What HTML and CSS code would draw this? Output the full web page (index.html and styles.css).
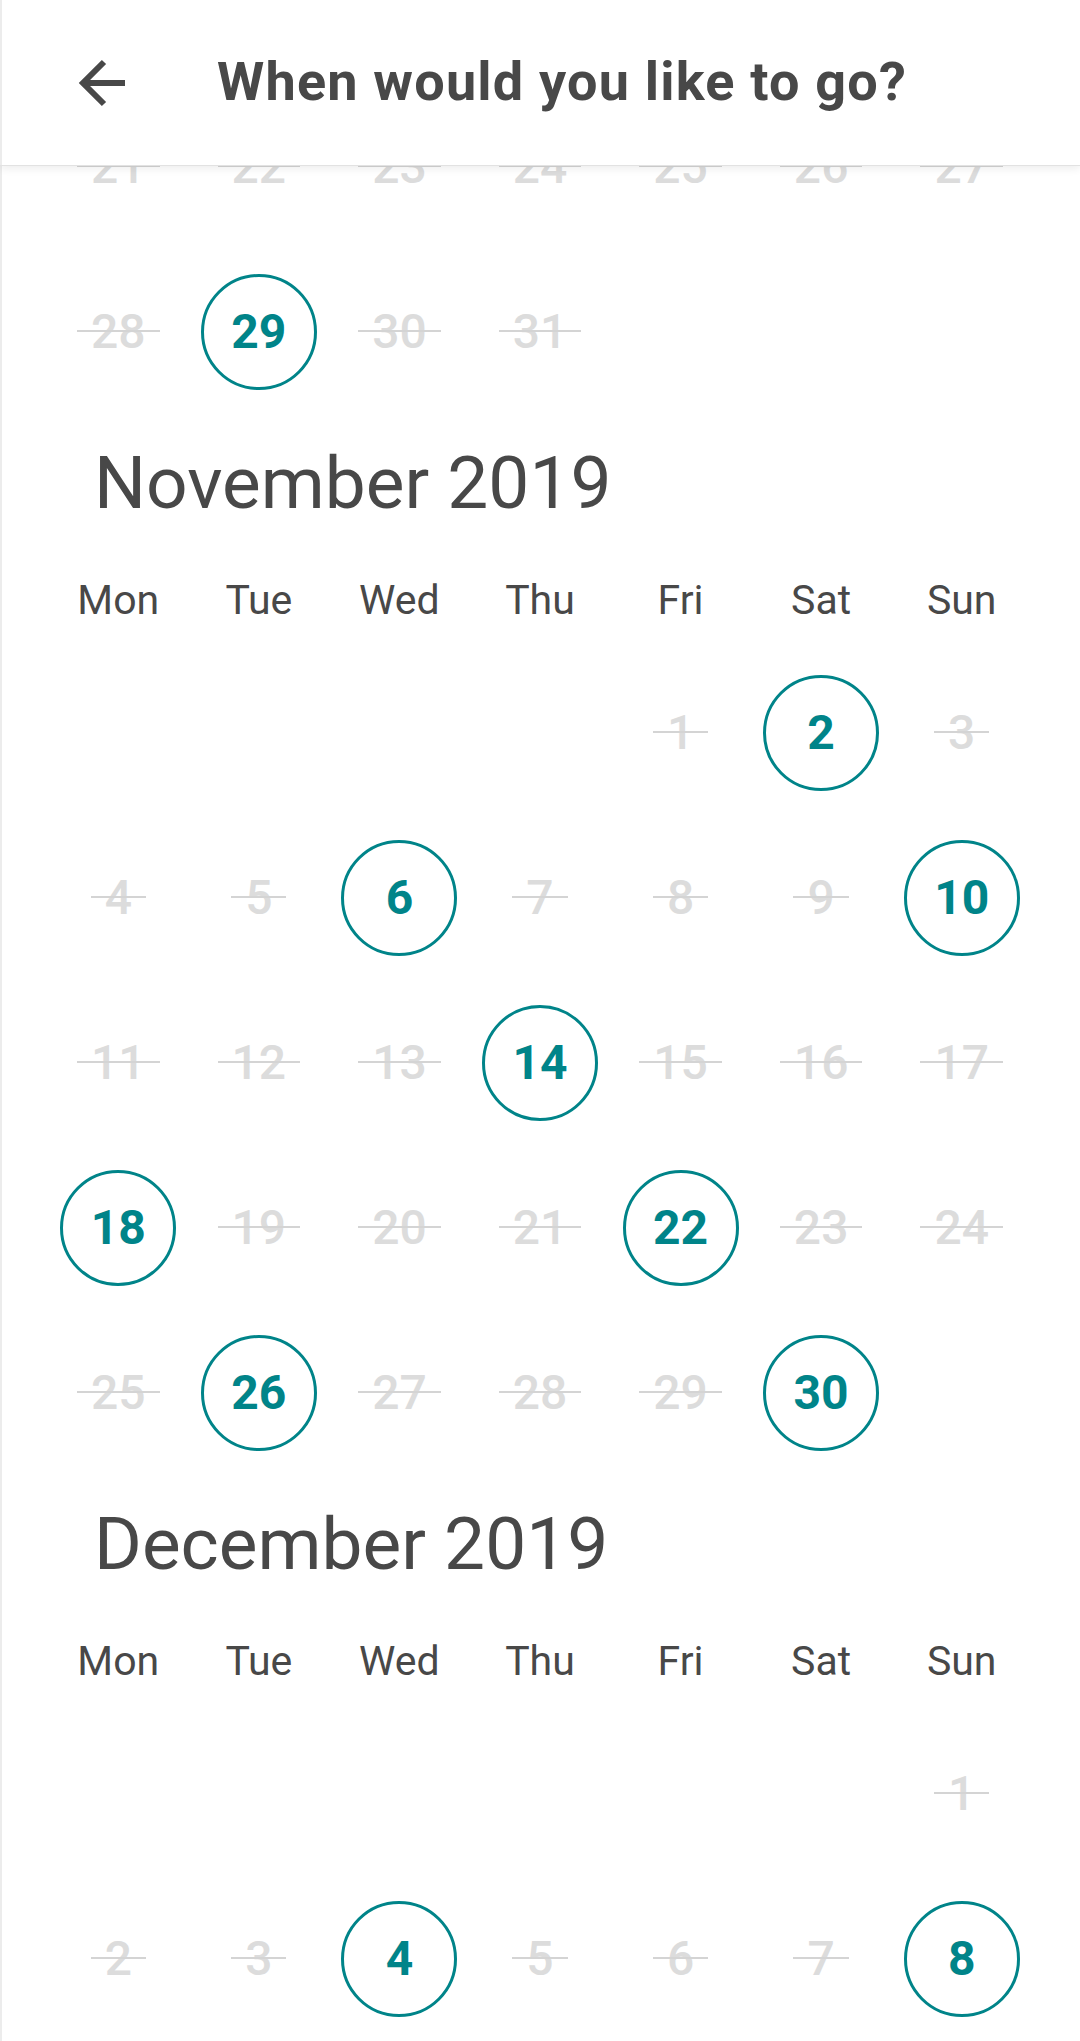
FILE: index.html
```html
<!DOCTYPE html>
<html lang="en">
<head>
<meta charset="utf-8">
<title>When would you like to go?</title>
<link rel="stylesheet" href="styles.css">
</head>
<body>
<header class="topbar">
  <button class="back" aria-label="Back">
    <svg class="back-icon" viewBox="0 0 48 48" width="48" height="48" aria-hidden="true">
      <path d="M47 24H6" />
      <path d="M26 3L5 24L26 45" />
    </svg>
  </button>
  <h1 class="topbar-title">When would you like to go?</h1>
</header>

<main class="calendar">
  <section class="month">
    <div class="week">
      <span class="day off"><span class="num">21</span></span>
      <span class="day off"><span class="num">22</span></span>
      <span class="day off"><span class="num">23</span></span>
      <span class="day off"><span class="num">24</span></span>
      <span class="day off"><span class="num">25</span></span>
      <span class="day off"><span class="num">26</span></span>
      <span class="day off"><span class="num">27</span></span>
    </div>
    <div class="week">
      <span class="day off"><span class="num">28</span></span>
      <span class="day on"><span class="num">29</span></span>
      <span class="day off"><span class="num">30</span></span>
      <span class="day off"><span class="num">31</span></span>
      <span class="day empty"></span>
      <span class="day empty"></span>
      <span class="day empty"></span>
    </div>
  </section>

  <section class="month">
    <h2 class="month-title">November 2019</h2>
    <div class="weekdays">
      <span>Mon</span><span>Tue</span><span>Wed</span><span>Thu</span><span>Fri</span><span>Sat</span><span>Sun</span>
    </div>
    <div class="week">
      <span class="day empty"></span>
      <span class="day empty"></span>
      <span class="day empty"></span>
      <span class="day empty"></span>
      <span class="day off"><span class="num">1</span></span>
      <span class="day on"><span class="num">2</span></span>
      <span class="day off"><span class="num">3</span></span>
    </div>
    <div class="week">
      <span class="day off"><span class="num">4</span></span>
      <span class="day off"><span class="num">5</span></span>
      <span class="day on"><span class="num">6</span></span>
      <span class="day off"><span class="num">7</span></span>
      <span class="day off"><span class="num">8</span></span>
      <span class="day off"><span class="num">9</span></span>
      <span class="day on"><span class="num">10</span></span>
    </div>
    <div class="week">
      <span class="day off"><span class="num">11</span></span>
      <span class="day off"><span class="num">12</span></span>
      <span class="day off"><span class="num">13</span></span>
      <span class="day on"><span class="num">14</span></span>
      <span class="day off"><span class="num">15</span></span>
      <span class="day off"><span class="num">16</span></span>
      <span class="day off"><span class="num">17</span></span>
    </div>
    <div class="week">
      <span class="day on"><span class="num">18</span></span>
      <span class="day off"><span class="num">19</span></span>
      <span class="day off"><span class="num">20</span></span>
      <span class="day off"><span class="num">21</span></span>
      <span class="day on"><span class="num">22</span></span>
      <span class="day off"><span class="num">23</span></span>
      <span class="day off"><span class="num">24</span></span>
    </div>
    <div class="week">
      <span class="day off"><span class="num">25</span></span>
      <span class="day on"><span class="num">26</span></span>
      <span class="day off"><span class="num">27</span></span>
      <span class="day off"><span class="num">28</span></span>
      <span class="day off"><span class="num">29</span></span>
      <span class="day on"><span class="num">30</span></span>
      <span class="day empty"></span>
    </div>
  </section>

  <section class="month">
    <h2 class="month-title">December 2019</h2>
    <div class="weekdays">
      <span>Mon</span><span>Tue</span><span>Wed</span><span>Thu</span><span>Fri</span><span>Sat</span><span>Sun</span>
    </div>
    <div class="week">
      <span class="day empty"></span>
      <span class="day empty"></span>
      <span class="day empty"></span>
      <span class="day empty"></span>
      <span class="day empty"></span>
      <span class="day empty"></span>
      <span class="day off"><span class="num">1</span></span>
    </div>
    <div class="week">
      <span class="day off"><span class="num">2</span></span>
      <span class="day off"><span class="num">3</span></span>
      <span class="day on"><span class="num">4</span></span>
      <span class="day off"><span class="num">5</span></span>
      <span class="day off"><span class="num">6</span></span>
      <span class="day off"><span class="num">7</span></span>
      <span class="day on"><span class="num">8</span></span>
    </div>
  </section>
</main>
</body>
</html>
```

FILE: styles.css
```css
html, body {
  margin: 0;
  padding: 0;
}

body {
  background: #ffffff;
  font-family: Roboto, "Liberation Sans", sans-serif;
  color: #484848;
  height: 2041px;
  overflow: hidden;
  box-shadow: inset 2px 0 0 #ececec;
}

.topbar {
  position: fixed;
  top: 0;
  left: 0;
  right: 0;
  height: 165px;
  background: #ffffff;
  border-bottom: 1px solid #e2e2e2;
  box-shadow: 0 3px 8px rgba(0, 0, 0, 0.07), inset 2px 0 0 #ececec;
  display: flex;
  align-items: center;
  padding-left: 78px;
  z-index: 2;
}

.back {
  border: 0;
  background: none;
  padding: 0;
  margin: 0;
  width: 48px;
  height: 48px;
  display: flex;
}

.back-icon {
  fill: none;
  stroke: #484848;
  stroke-width: 6;
  stroke-linejoin: miter;
}

.topbar-title {
  margin: 0 0 2px 91px;
  font-size: 54px;
  font-weight: 700;
  color: #484848;
  letter-spacing: 1.2px;
}

.calendar {
  padding: 84px 48px 0;
}

.month-title {
  margin: 0;
  padding-left: 46px;
  height: 137px;
  line-height: 138px;
  font-size: 73px;
  font-weight: 400;
  color: #484848;
}

.weekdays {
  display: grid;
  grid-template-columns: repeat(7, 1fr);
  height: 99px;
  line-height: 99px;
  font-size: 41px;
  text-align: center;
  color: #484848;
}

.week {
  display: grid;
  grid-template-columns: repeat(7, 1fr);
  height: 165px;
  align-items: center;
  justify-items: center;
}

.day {
  width: 116px;
  height: 116px;
  box-sizing: border-box;
  border-radius: 50%;
  display: flex;
  align-items: center;
  justify-content: center;
  font-size: 48px;
  font-weight: 500;
  line-height: 1;
}

.off {
  color: #dcdcdc;
}

.off .num {
  position: relative;
}

.off .num::after {
  content: "";
  position: absolute;
  left: -14px;
  right: -14px;
  top: 50%;
  height: 2px;
  margin-top: -2px;
  background: #d4d4d4;
}

.on {
  border: 3px solid #008489;
  color: #008489;
  font-weight: 700;
}
```
